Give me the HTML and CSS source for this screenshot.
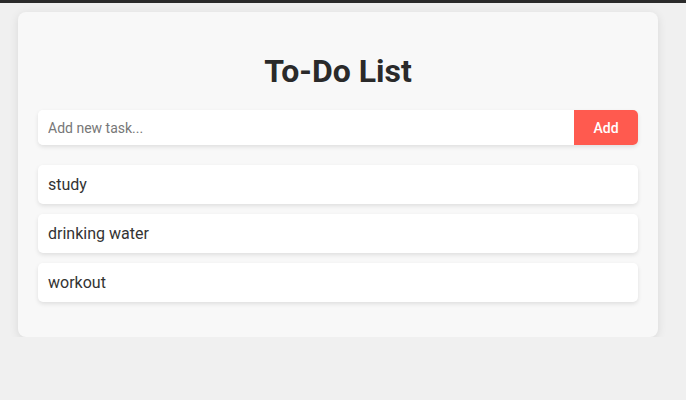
FILE: index.html
```html
<!DOCTYPE html>
<html lang="en">
<head>
<meta charset="utf-8">
<title>To-Do List</title>
<link rel="stylesheet" href="styles.css">
</head>
<body>
<div class="topbar"></div>
<main class="container">
  <h1 class="title">To-Do List</h1>
  <div class="add-row">
    <input class="task-input" type="text" placeholder="Add new task...">
    <button class="add-btn">Add</button>
  </div>
  <ul class="task-list">
    <li class="task">study</li>
    <li class="task">drinking water</li>
    <li class="task">workout</li>
  </ul>
</main>
</body>
</html>
```
FILE: styles.css
```css
* { box-sizing: border-box; }
html, body { margin: 0; padding: 0; }
body {
  background: #f0f0f0;
  font-family: Roboto, "Liberation Sans", Arial, sans-serif;
  color: #333;
}
.topbar {
  height: 3px;
  background: #2b2b2b;
}
.container {
  width: 640px;
  margin: 9px 0 0 18px;
  background: #f8f8f8;
  border-radius: 8px;
  box-shadow: 0 2px 10px rgba(0,0,0,0.1);
  padding: 20px 20px 35px;
}
.title {
  margin: 20px 0;
  font-size: 32px;
  font-weight: 700;
  text-align: center;
  color: #2a2a2a;
}
.add-row {
  display: flex;
  height: 35px;
  border-radius: 5px;
  box-shadow: 0 2px 4px rgba(0,0,0,0.1);
  margin-bottom: 20px;
}
.task-input {
  flex: 1;
  border: none;
  outline: none;
  background: #fff;
  border-radius: 5px 0 0 5px;
  padding: 0 10px;
  font-family: inherit;
  font-size: 14px;
  color: #333;
}
.task-input::placeholder { color: #777; }
.add-btn {
  width: 64px;
  border: none;
  background: #ff5a4f;
  color: #fff;
  font-family: inherit;
  font-size: 14px;
  font-weight: 500;
  border-radius: 0 5px 5px 0;
}
.task-list {
  list-style: none;
  margin: 0;
  padding: 0;
  display: flex;
  flex-direction: column;
  gap: 10px;
}
.task {
  background: #fff;
  border-radius: 5px;
  box-shadow: 0 2px 4px rgba(0,0,0,0.1);
  padding: 10px;
  font-size: 16px;
  color: #333;
}
```
